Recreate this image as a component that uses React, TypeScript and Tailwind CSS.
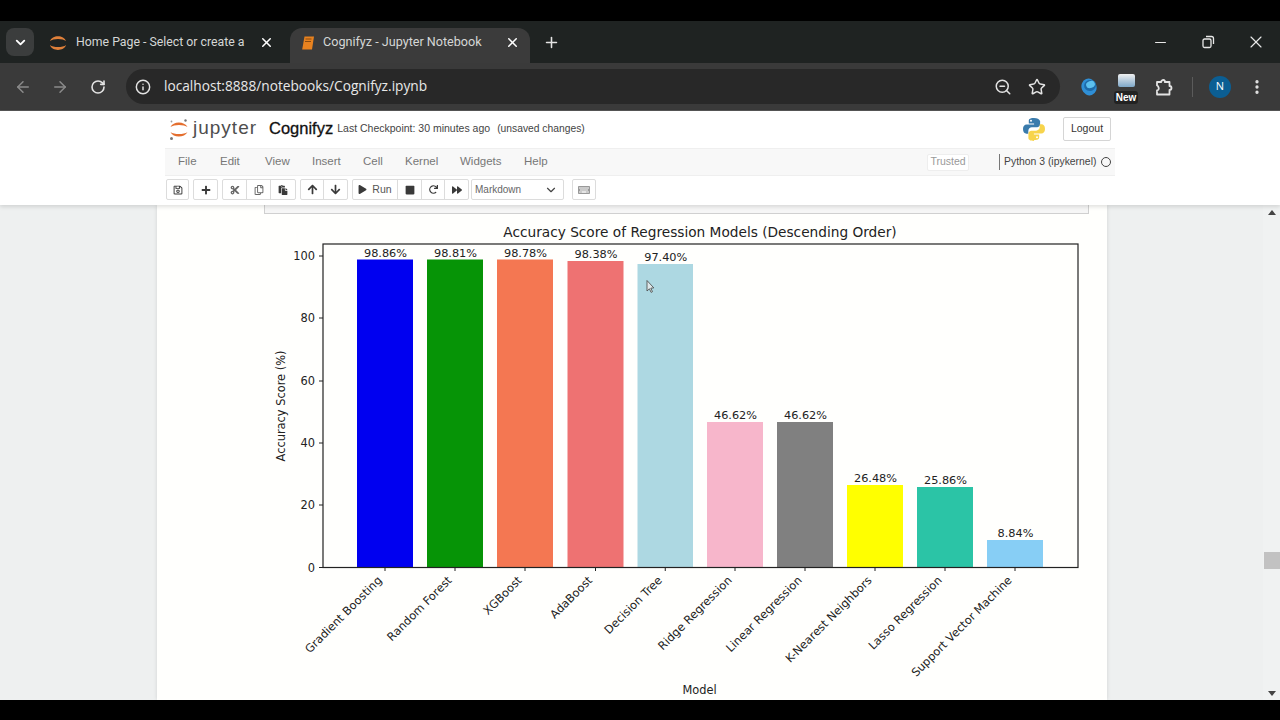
import { ArrowLeft, ArrowRight, ChevronDown, EllipsisVertical, Info, Minus, Plus, RotateCw, Star, X, ZoomOut } from "lucide-react";
import { FaArrowDown, FaArrowUp, FaCut, FaForward, FaKeyboard, FaPaste, FaPlay, FaPlus, FaRedo, FaRegCopy, FaRegSave, FaStop } from "react-icons/fa";
import type { ReactNode } from "react";

const bars = [
  { name: "Gradient Boosting", label: "98.86%", x: 357, w: 56, top: 259.5, color: "#0000f0" },
  { name: "Random Forest", label: "98.81%", x: 427, w: 56, top: 259.5, color: "#069406" },
  { name: "XGBoost", label: "98.78%", x: 497, w: 56, top: 259.5, color: "#f47752" },
  { name: "AdaBoost", label: "98.38%", x: 567.5, w: 56, top: 261, color: "#ee7272" },
  { name: "Decision Tree", label: "97.40%", x: 637.5, w: 55.5, top: 264, color: "#add8e2" },
  { name: "Ridge Regression", label: "46.62%", x: 707, w: 56, top: 422, color: "#f7b6cb" },
  { name: "Linear Regression", label: "46.62%", x: 777, w: 56, top: 422, color: "#808080" },
  { name: "K-Nearest Neighbors", label: "26.48%", x: 847, w: 56, top: 485, color: "#ffff00" },
  { name: "Lasso Regression", label: "25.86%", x: 917, w: 56, top: 487, color: "#2bc4a6" },
  { name: "Support Vector Machine", label: "8.84%", x: 987, w: 56, top: 540, color: "#87cef5" },
];

const yTicks = [
  { v: "100", y: 256 },
  { v: "80", y: 318 },
  { v: "60", y: 381 },
  { v: "40", y: 443 },
  { v: "20", y: 505 },
  { v: "0", y: 567.5 },
];

const menuItems = [
  { name: "File", w: "w-[42px]" },
  { name: "Edit", w: "w-[45px]" },
  { name: "View", w: "w-[47px]" },
  { name: "Insert", w: "w-[51px]" },
  { name: "Cell", w: "w-[42px]" },
  { name: "Kernel", w: "w-[55px]" },
  { name: "Widgets", w: "w-[64px]" },
  { name: "Help", w: "w-[40px]" },
];

function ToolBtn({ w = "w-[24px]", children }: { w?: string; children: ReactNode }) {
  return (
    <div className={`flex h-[19px] ${w} items-center justify-center border-r border-[#dcdcdc] text-[#3a3a3a] last:border-r-0`}>
      {children}
    </div>
  );
}

function ToolGroup({ children }: { children: ReactNode }) {
  return <div className="flex rounded-[2px] border border-[#dcdcdc] bg-white">{children}</div>;
}

function JupyterLogo() {
  return (
    <svg width="22" height="26" viewBox="0 0 22 26">
      <path d="M2.5 11C5 5 16.5 5 19.5 11C16 8.2 6 8.2 2.5 11Z" fill="#e46e2e" />
      <path d="M2.5 16C5 22 16.5 22 19.5 16C16 18.8 6 18.8 2.5 16Z" fill="#e46e2e" />
      <circle cx="17.5" cy="4.5" r="1.2" fill="#767677" />
      <circle cx="3.5" cy="22.5" r="1.5" fill="#767677" />
      <circle cx="3.5" cy="5.5" r="0.9" fill="#9e9e9e" />
    </svg>
  );
}

function PythonLogo() {
  return (
    <svg width="24" height="24" viewBox="0 0 24 24">
      <path d="M11.9 1C7 1 6.8 3 6.8 3.8V6.6h5.3v1H4.6C2.6 7.6 1 9.3 1 12.1c0 3 1.5 4.6 3.4 4.6h1.9v-2.8c0-2 1.7-3.6 3.6-3.6h5.2c1.6 0 3-1.4 3-3V3.9C17.1 2.3 15.6 1 11.9 1Z" fill="#3a7bac" />
      <path d="M12.1 23c4.9 0 5.1-2 5.1-2.8v-2.8h-5.3v-1h7.5c2 0 3.6-1.7 3.6-4.5 0-3-1.5-4.6-3.4-4.6h-1.9v2.8c0 2-1.7 3.6-3.6 3.6H9.4c-1.6 0-3 1.4-3 3v4.4c0 1.6 1.5 2.9 5.7 2.9Z" fill="#f7d44c" />
      <circle cx="9" cy="3.8" r="1" fill="#fff" />
      <circle cx="15" cy="20.2" r="1" fill="#fff" />
    </svg>
  );
}

function Chart() {
  return (
    <svg width="950" height="486" viewBox="157 214 950 486" className="font-['DejaVu_Sans',sans-serif]">
      <text x="700" y="236.5" textAnchor="middle" fontSize="13.7" fill="#222">
        Accuracy Score of Regression Models (Descending Order)
      </text>
      {bars.map((b) => (
        <g key={b.name}>
          <rect x={b.x} y={b.top} width={b.w} height={567.5 - b.top} fill={b.color} />
          <text x={b.x + b.w / 2 + 0.5} y={b.top - 3} textAnchor="middle" fontSize="11.3" fill="#222">
            {b.label}
          </text>
          <line x1={b.x + b.w / 2} x2={b.x + b.w / 2} y1="567.5" y2="571" stroke="#222" />
          <text
            x={b.x + b.w / 2 - 2.5}
            y="581"
            textAnchor="end"
            fontSize="11.4"
            fill="#222"
            transform={`rotate(-45 ${b.x + b.w / 2 - 2.5} 581)`}
          >
            {b.name}
          </text>
        </g>
      ))}
      <rect x="323" y="244" width="755" height="323.5" fill="none" stroke="#222" strokeWidth="1.2" />
      {yTicks.map((t) => (
        <g key={t.v}>
          <line x1="319" x2="323" y1={t.y} y2={t.y} stroke="#222" />
          <text x="315" y={t.y + 4.2} textAnchor="end" fontSize="11.4" fill="#222">
            {t.v}
          </text>
        </g>
      ))}
      <text x="285" y="406" textAnchor="middle" fontSize="11.4" fill="#222" transform="rotate(-90 285 406)">
        Accuracy Score (%)
      </text>
      <text x="699.5" y="694" textAnchor="middle" fontSize="11.4" fill="#222">
        Model
      </text>
      {/* mouse pointer */}
      <path d="M647 280.5v10.5l2.4-2.2 1.7 3.6 1.4-.7-1.7-3.5 3-.3Z" fill="#dfe8ea" stroke="#444" strokeWidth="0.8" />
    </svg>
  );
}

export default function App() {
  return (
    <div className="flex h-[720px] w-[1280px] flex-col overflow-hidden bg-black font-['Liberation_Sans',sans-serif]">
      <div className="h-[21px] shrink-0 bg-black" />

      {/* tab strip */}
      <div className="flex h-[42px] shrink-0 items-end bg-[#1f2322] pl-[6px] font-['Roboto',sans-serif] text-[#d5d7d6]">
        <div className="mb-[7px] flex h-[28px] w-[28px] items-center justify-center rounded-lg bg-[#3b3d3d]">
          <ChevronDown size={15} strokeWidth={3} className="text-white" />
        </div>
        <div className="ml-[6px] flex h-[35px] w-[250px] items-center pb-[6px] pl-[8px]">
          <svg width="20" height="20" viewBox="0 0 20 20" className="shrink-0">
            <path d="M2 8C4 1.5 16 1.5 18 8C15 5.2 5 5.2 2 8Z" fill="#e0803a" />
            <path d="M2 12C4 18.5 16 18.5 18 12C15 14.8 5 14.8 2 12Z" fill="#e0803a" />
          </svg>
          <span className="ml-[8px] w-[172px] text-[12.3px] whitespace-nowrap">Home Page - Select or create a</span>
          <X size={15} strokeWidth={2.4} className="ml-[11px] text-white" />
        </div>
        <div className="flex h-[35px] w-[240px] items-center rounded-t-xl bg-[#3b3b3b] pb-[6px] pl-[10px]">
          <svg width="16" height="16" viewBox="0 0 16 16" className="shrink-0">
            <path d="M4.5 1.5H14L12 14.5H2.2Z" fill="#e8821f" />
            <path d="M5.5 4h6M5 6.5h6" stroke="#8a4b10" strokeWidth="1" />
          </svg>
          <span className="ml-[7px] w-[176px] text-[12.6px] whitespace-nowrap">Cognifyz - Jupyter Notebook</span>
          <X size={15} strokeWidth={2.4} className="ml-[6px] text-white" />
        </div>
        <Plus size={17} strokeWidth={2.2} className="mb-[12px] ml-[13px] text-[#e4e4e4]" />
        <div className="ml-auto flex h-full items-center text-[#e8e8e8]">
          <div className="flex w-[48px] justify-center"><Minus size={17} strokeWidth={1.5} /></div>
          <div className="flex w-[48px] justify-center">
            <svg width="14" height="14" viewBox="0 0 14 14" fill="none" stroke="currentColor" strokeWidth="1.3">
              <rect x="2" y="4" width="8" height="8.5" rx="1.5" />
              <path d="M5 1.5h5.5a2 2 0 0 1 2 2V9" />
            </svg>
          </div>
          <div className="flex w-[48px] justify-center"><X size={20} strokeWidth={1.4} /></div>
        </div>
      </div>

      {/* address bar */}
      <div className="flex h-[48px] shrink-0 items-center border-b border-[#555] bg-[#3a3a3a] pl-[14px] text-[#e3e3e3]">
        <ArrowLeft size={18} className="text-[#8a8a8a]" />
        <ArrowRight size={18} className="ml-[19px] text-[#8a8a8a]" />
        <RotateCw size={16} strokeWidth={2.4} className="ml-[21px]" />
        <div className="ml-[20px] flex h-[35px] w-[934px] items-center rounded-full bg-[#282828] pl-[9px]">
          <Info size={16} strokeWidth={2.2} />
          <span className="ml-[13px] font-['Open_Sans',sans-serif] text-[13.7px] text-[#e8e8e8]">localhost:8888/notebooks/Cognifyz.ipynb</span>
          <ZoomOut size={18} strokeWidth={2} className="ml-auto" />
          <Star size={18} strokeWidth={2} className="mr-[14px] ml-[16px]" />
        </div>
        <svg width="18" height="20" viewBox="0 0 18 20" className="ml-[20px]">
          <ellipse cx="9" cy="10" rx="7.5" ry="8.5" fill="#2f8fd6" transform="rotate(-20 9 10)" />
          <ellipse cx="10" cy="8.5" rx="6" ry="5.5" fill="#1e6aa8" transform="rotate(-20 10 8.5)" />
          <ellipse cx="10.5" cy="7.5" rx="4.5" ry="3.5" fill="#5cc0ee" transform="rotate(-20 10.5 7.5)" />
        </svg>
        <div className="relative ml-[14px] flex h-[30px] w-[28px] flex-col items-center">
          <div className="mt-[2px] h-[13px] w-[17px] rounded-[2px] bg-gradient-to-b from-[#f0f0f0] to-[#7ea8c8]" />
          <div className="absolute bottom-[-2px] rounded-[3px] bg-[#222] px-[2px] text-[10px] leading-[13px] font-bold text-white">New</div>
        </div>
        <svg width="20" height="20" viewBox="0 0 20 20" fill="none" stroke="#e3e3e3" strokeWidth="1.8" strokeLinejoin="round" className="ml-[14px]">
          <path d="M3 5h4.2a2 2 0 0 1 3.6-1.2V5H15.5v4a2 2 0 0 1 0 4v4.5H3v-4a2 2 0 0 0 1.5-3A2 2 0 0 0 3 8.5Z" />
        </svg>
        <div className="ml-[18px] h-[20px] w-px bg-[#5b5b5b]" />
        <div className="ml-[16px] flex h-[22px] w-[22px] items-center justify-center rounded-full bg-[#0b5e93] font-['Open_Sans',sans-serif] text-[11px] text-white">N</div>
        <EllipsisVertical size={18} strokeWidth={2.4} className="ml-[17px]" />
      </div>

      {/* jupyter header */}
      <div className="relative z-10 shrink-0 bg-white shadow-[0_2px_4px_rgba(0,0,0,0.12)]">
        <div className="ml-[165px] flex h-[37px] w-[950px] items-center pb-[2px]">
          <div className="ml-[3px] flex h-[26px] w-[22px] items-center"><JupyterLogo /></div>
          <span className="ml-[3px] w-[76px] text-[19px] tracking-[1px] text-[#4e4e4e]">jupyter</span>
          <span className="text-[16.5px] font-medium text-[#111] [-webkit-text-stroke:0.3px_#111]">Cognifyz</span>
          <span className="ml-[4px] text-[10.5px] text-[#444]">Last Checkpoint: 30 minutes ago</span>
          <span className="ml-[7px] text-[10.3px] text-[#444]">(unsaved changes)</span>
          <div className="ml-auto"><PythonLogo /></div>
          <div className="mr-[4px] ml-[17px] flex h-[24px] w-[48px] items-center justify-center rounded-[2px] border border-[#d5d5d5] text-[10.5px] text-[#333]">Logout</div>
        </div>
        <div className="ml-[165px] flex h-[28px] w-[950px] items-center border-y border-[#efefef] bg-[#f8f8f8] text-[11.5px] text-[#777]">
          <div className="flex shrink-0 pl-[13px]">
            {menuItems.map((m) => (
              <span key={m.name} className={m.w}>{m.name}</span>
            ))}
          </div>
          <div className="ml-[363px] flex h-[17px] w-[42px] shrink-0 items-center justify-center rounded-[2px] border border-[#eee] bg-white text-[10.5px] text-[#999]">Trusted</div>
          <div className="ml-[30px] h-[16px] w-px shrink-0 bg-[#777]" />
          <span className="ml-[4px] w-[91px] shrink-0 text-[10.4px] whitespace-nowrap text-[#444]">Python 3 (ipykernel)</span>
          <div className="ml-[6px] h-[10px] w-[10px] shrink-0 rounded-full border-[1.5px] border-[#444]" />
        </div>
        <div className="ml-[165px] flex h-[29px] w-[950px] items-center gap-[4px] pb-[2px] pl-px text-[10.5px]">
          <ToolGroup><ToolBtn w="w-[21px]"><FaRegSave size={10} /></ToolBtn></ToolGroup>
          <ToolGroup><ToolBtn w="w-[23px]"><FaPlus size={10} /></ToolBtn></ToolGroup>
          <ToolGroup>
            <ToolBtn><FaCut size={10} className="text-[#666]" /></ToolBtn>
            <ToolBtn><FaRegCopy size={10} className="text-[#666]" /></ToolBtn>
            <ToolBtn><FaPaste size={10} /></ToolBtn>
          </ToolGroup>
          <ToolGroup>
            <ToolBtn w="w-[23px]"><FaArrowUp size={11} /></ToolBtn>
            <ToolBtn w="w-[23px]"><FaArrowDown size={11} /></ToolBtn>
          </ToolGroup>
          <ToolGroup>
            <ToolBtn w="w-[45px]"><FaPlay size={9} /><span className="ml-[5px] text-[#555]">Run</span></ToolBtn>
            <ToolBtn><FaStop size={10} /></ToolBtn>
            <ToolBtn w="w-[23px]"><FaRedo size={9} /></ToolBtn>
            <ToolBtn w="w-[23px]"><FaForward size={10} /></ToolBtn>
          </ToolGroup>
          <div className="ml-[-2px] flex h-[21px] w-[93px] items-center rounded-[2px] border border-[#dcdcdc] bg-white pr-[5px] pl-[3px] text-[10px] text-[#666]">
            Markdown
            <ChevronDown size={14} className="ml-auto text-[#444]" />
          </div>
          <div className="ml-[4px] flex h-[21px] w-[24px] items-center justify-center rounded-[2px] border border-[#dcdcdc] bg-white text-[#999]">
            <FaKeyboard size={12} />
          </div>
        </div>
      </div>

      {/* notebook body */}
      <div className="flex h-[495px] shrink-0 bg-[#eef0f0]">
        <div className="ml-[157px] h-full w-[950px] bg-[#fffffd] shadow-[0_0_4px_rgba(0,0,0,0.12)]">
          <div className="ml-[107px] h-[9px] w-[825px] border-x border-b border-[#d0d0d0] bg-[#f6f6f6]" />
          <Chart />
        </div>
        <div className="ml-auto flex w-[17px] flex-col items-center bg-[#f0f2f2] text-[#444]">
          <div className="mt-[5px] h-0 w-0 border-x-[4px] border-b-[5px] border-x-transparent border-b-[#444]" />
          <div className="mt-[337px] h-[17px] w-[16px] bg-[#c2c2c2]" />
          <div className="mt-[122px] h-0 w-0 border-x-[4px] border-t-[5px] border-x-transparent border-t-[#444]" />
        </div>
      </div>
      <div className="flex-1 bg-black" />
    </div>
  );
}
